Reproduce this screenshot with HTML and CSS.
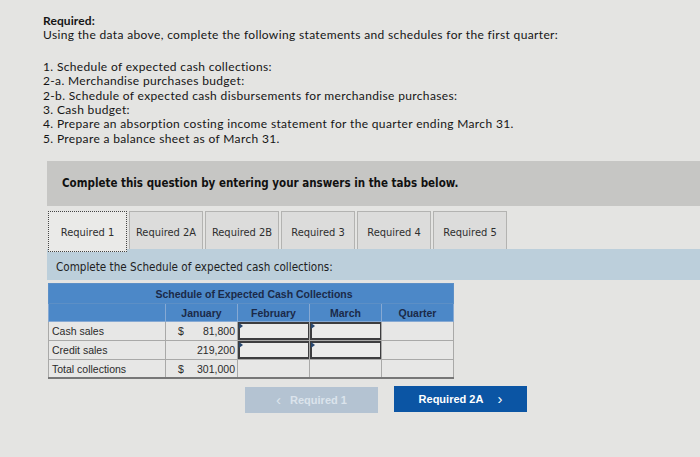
FILE: index.html
```html
<!DOCTYPE html>
<html lang="en">
<head>
    <meta charset="UTF-8">
    <meta name="viewport" content="width=device-width, initial-scale=1.0">
    <title>Required</title>
    <link rel="stylesheet" href="styles.css">
</head>
<body>
    <div class="intro">
        <p class="req-title">Required:</p>
        <p>Using the data above, complete the following statements and schedules for the first quarter:</p>
        <div class="steps">
            <p>1. Schedule of expected cash collections:</p>
            <p>2-a. Merchandise purchases budget:</p>
            <p>2-b. Schedule of expected cash disbursements for merchandise purchases:</p>
            <p>3. Cash budget:</p>
            <p>4. Prepare an absorption costing income statement for the quarter ending March 31.</p>
            <p>5. Prepare a balance sheet as of March 31.</p>
        </div>
    </div>

    <div class="question">
        <div class="question-head">Complete this question by entering your answers in the tabs below.</div>

        <div class="tabs">
            <div class="tab active">Required 1</div>
            <div class="tab">Required 2A</div>
            <div class="tab">Required 2B</div>
            <div class="tab">Required 3</div>
            <div class="tab">Required 4</div>
            <div class="tab">Required 5</div>
        </div>

        <div class="panel-note">Complete the Schedule of expected cash collections:</div>

        <table class="schedule">
            <tr class="head-1">
                <th colspan="5">Schedule of Expected Cash Collections</th>
            </tr>
            <tr class="head-2">
                <th class="label-col"></th>
                <th>January</th>
                <th>February</th>
                <th>March</th>
                <th>Quarter</th>
            </tr>
            <tr>
                <td class="label-col">Cash sales</td>
                <td class="amount"><span>$</span>81,800</td>
                <td class="input"><div class="box"></div></td>
                <td class="input"><div class="box"></div></td>
                <td></td>
            </tr>
            <tr>
                <td class="label-col">Credit sales</td>
                <td class="amount">219,200</td>
                <td class="input"><div class="box"></div></td>
                <td class="input"><div class="box"></div></td>
                <td></td>
            </tr>
            <tr class="total">
                <td class="label-col">Total collections</td>
                <td class="amount"><span>$</span>301,000</td>
                <td></td>
                <td></td>
                <td></td>
            </tr>
        </table>

        <div class="nav">
            <button class="nav-btn prev" disabled><span class="chev">&lsaquo;</span>Required 1</button>
            <button class="nav-btn next">Required 2A<span class="chev after">&rsaquo;</span></button>
        </div>
    </div>
</body>
</html>
```

FILE: styles.css
```css
* {
    box-sizing: border-box;
    margin: 0;
    padding: 0;
}

body {
    background-color: #e4e4e2;
    color: #151515;
    font-family: Lato, "Open Sans", sans-serif;
}

.intro {
    padding: 14px 0 0 43px;
    font-size: 12px;
    line-height: 14.4px;
    letter-spacing: 0.35px;
}

.req-title {
    font-weight: bold;
    letter-spacing: 0.1px;
}

.steps {
    margin-top: 17px;
}

.question {
    margin: 15px 0 0 47px;
}

.question-head {
    background-color: #c6c6c4;
    height: 45px;
    padding: 15px 0 0 15px;
    font-family: "DejaVu Sans Condensed", "DejaVu Sans", sans-serif;
    font-stretch: condensed;
    font-size: 11.5px;
    font-weight: bold;
    color: #111;
}

.tabs {
    display: flex;
    gap: 2px;
    margin-top: 5px;
    padding-left: 1px;
    height: 38px;
}

.tab {
    width: 74px;
    height: 38px;
    padding-top: 14px;
    text-align: center;
    background-color: #dcdcdb;
    border: 1px solid #b3b3b1;
    border-bottom: none;
    font-family: "DejaVu Sans Condensed", "DejaVu Sans", sans-serif;
    font-stretch: condensed;
    font-size: 11px;
    color: #2e2e2e;
}

.tab.active {
    width: 79px;
    height: 41px;
    background-color: #eaeae8;
    border: 1px dotted #444;
    position: relative;
    z-index: 1;
}

.panel-note {
    background-color: #bccfdb;
    height: 31px;
    padding: 11px 0 0 9px;
    font-family: "DejaVu Sans Condensed", "DejaVu Sans", sans-serif;
    font-stretch: condensed;
    font-size: 11.6px;
    color: #1e1e1e;
}

.schedule {
    margin: 3px 0 0 1px;
    border-collapse: collapse;
    font-family: "Liberation Sans", Arial, sans-serif;
    font-size: 10.5px;
    border-bottom: 2px solid #777;
}

.schedule th {
    background-color: #4c88c8;
    color: #1b2a48;
    font-weight: bold;
    height: 18px;
    padding: 0;
    border: 1px solid #86a9d3;
}

.head-1 th {
    height: 20px;
    padding-left: 6px;
    border-color: #5c8fc6;
}

.head-2 th {
    width: 72px;
}

.head-2 th.label-col {
    width: 117px;
}

.schedule td {
    height: 18px;
    padding: 0;
    background-color: #e7e7e6;
    border: 1px solid #a9a9a8;
    color: #2a2a2a;
}

.schedule td.label-col {
    padding-left: 3px;
}

.schedule td.amount {
    text-align: right;
    padding: 0 2px 0 12px;
}

.amount span {
    float: left;
}

.schedule td.input {
    position: relative;
}

.box {
    height: 18px;
    border: 2px solid #3d3d3f;
    border-right-width: 1px;
    background-color: #ebebea;
}

.input::before {
    content: "";
    position: absolute;
    left: 1px;
    top: 1px;
    border-top: 3px solid transparent;
    border-bottom: 3px solid transparent;
    border-left: 4px solid #27476f;
}

.nav {
    display: flex;
    gap: 16px;
    margin-top: 7px;
    padding-left: 198px;
}

.nav-btn {
    width: 133px;
    height: 26px;
    border: none;
    font-family: "Liberation Sans", Arial, sans-serif;
    font-size: 11px;
    font-weight: bold;
}

.chev {
    font-size: 15px;
    font-weight: normal;
    margin-right: 9px;
    vertical-align: -1px;
}

.chev.after {
    margin: 0 0 0 14px;
}

.prev {
    background-color: #b4c3d2;
    color: #dbe3ec;
    margin-top: 1px;
}

.next {
    background-color: #0b55a4;
    color: #fff;
}
```
